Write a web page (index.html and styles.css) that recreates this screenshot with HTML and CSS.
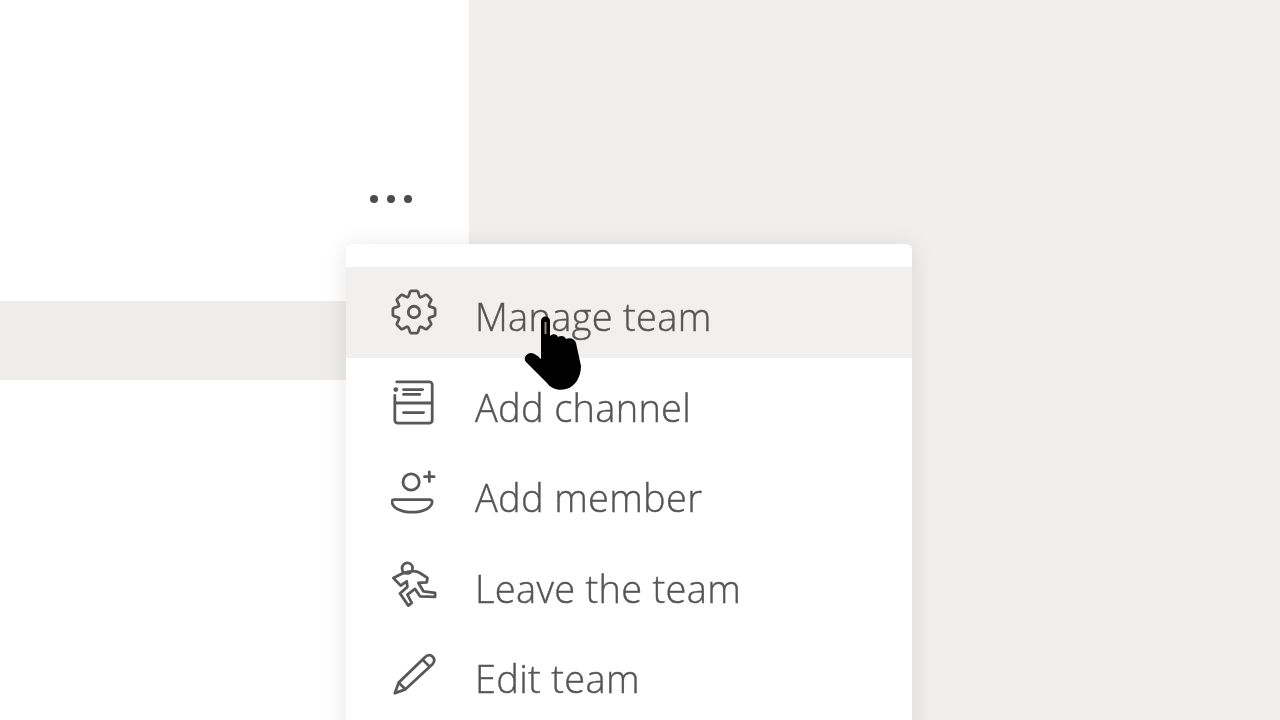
FILE: index.html
```html
<!DOCTYPE html>
<html lang="en">
<head>
  <meta charset="UTF-8">
  <title>Team menu</title>
  <link rel="stylesheet" href="styles.css">
</head>
<body>
  <div class="sidebar">
    <div class="more">
      <span class="dot"></span><span class="dot"></span><span class="dot"></span>
    </div>
    <div class="team-row"></div>
  </div>
  <div class="main"></div>

  <!-- Team options menu -->
  <div class="menu">
    <div class="item hover">
      <svg class="icon" viewBox="0 0 48 48">
        <defs><path id="tooth" d="M17.500 8.300C19.500 7.500 19 2 21 2h6c2 0 1.500 5.500 3.500 6.300"/></defs>
        <use href="#tooth"/>
        <use href="#tooth" transform="rotate(45 24 24)"/>
        <use href="#tooth" transform="rotate(90 24 24)"/>
        <use href="#tooth" transform="rotate(135 24 24)"/>
        <use href="#tooth" transform="rotate(180 24 24)"/>
        <use href="#tooth" transform="rotate(225 24 24)"/>
        <use href="#tooth" transform="rotate(270 24 24)"/>
        <use href="#tooth" transform="rotate(315 24 24)"/>
        <circle cx="24" cy="24" r="6"/>
      </svg>
      <span class="label">Manage team</span>
    </div>
    <div class="item">
      <svg class="icon" viewBox="0 0 48 48">
        <path d="M6 2h34a3 3 0 0 1 3 3v37a3 3 0 0 1-3 3H7a3 3 0 0 1-3-3V16M4 24h39M13 34h21M13 10h20M13 15h17"/>
        <circle class="solid" cx="5" cy="10" r="2.500"/>
      </svg>
      <span class="label">Add channel</span>
    </div>
    <div class="item">
      <svg class="icon" viewBox="0 0 48 48">
        <circle cx="21" cy="12.500" r="8.500"/>
        <path d="M3 31h37c2 0 3 1 3 2.500C42 40 33 44 22 44S2 40 1 33.500C1 32 1.500 31 3 31zM40 2v10M35 7h10"/>
      </svg>
      <span class="label">Add member</span>
    </div>
    <div class="item">
      <svg class="icon" viewBox="0 0 48 48">
        <circle cx="17" cy="7.500" r="5.500"/>
        <path d="M11.200 13.200L2.500 17.700l7.600 8 6.300-4.500.7 5.800-7.700 7 8.700 12.600 3.500-2.800-4.500-8.800 8-5.800 5.200 7.600L46 37.500v-4.200l-12.200-1.700-5.200-8.700 8.700-.7.700-4.500-7.700-5.200c-5-3-12-2-19.100.7z"/>
      </svg>
      <span class="label">Leave the team</span>
    </div>
    <div class="item">
      <svg class="icon" viewBox="0 0 48 48">
        <path d="M4 44l4-11L36 6c2.500-2 5.500-2 7.500 0s2 5 0 7.500L15 40zM8 33l7 7M33 9l6 6"/>
      </svg>
      <span class="label">Edit team</span>
    </div>
  </div>

  <svg class="cursor" viewBox="0 0 58 74">
    <path d="M17 5c0-6 9-6 9 0v15c3-3 7-2 8 1 3-2 7-1 8 2 4-2 9 0 10 4l5 23c0 11-6 21-15 23-7 2-15 0-19-6L2 46c-3-3 0-9 5-9 3 0 7 3 10 6z"/>
    <path class="shine" d="M20.500 6h2v12h-2z"/>
  </svg>
</body>
</html>
```

FILE: styles.css
```css
html, body {
  margin: 0;
  height: 720px;
  overflow: hidden;
}
body {
  display: flex;
  font-family: 'Open Sans', sans-serif;
  background: #f0efed;
}
.sidebar {
  width: 469px;
  height: 720px;
  background: #fff;
}
.more {
  display: flex;
  justify-content: flex-end;
  gap: 9px;
  padding: 195px 57px 0 0;
  height: 301px;
  box-sizing: border-box;
}
.dot {
  width: 8px;
  height: 8px;
  border-radius: 50%;
  background: #4b4b50;
}
.team-row {
  height: 79px;
  background: #eeedeb;
}
.main {
  flex: 1;
}
.menu {
  position: absolute;
  left: 346px;
  top: 244px;
  width: 566px;
  height: 500px;
  padding-top: 23px;
  box-sizing: border-box;
  background: #fff;
  border-radius: 6px;
  box-shadow: 0 2px 24px rgba(0, 0, 0, 0.1);
}
.item {
  display: flex;
  align-items: center;
  gap: 38px;
  height: 90.5px;
  padding-left: 45px;
  font-size: 38px;
  font-weight: 300;
  letter-spacing: 0.3px;
  color: #555;
  -webkit-text-stroke: 0.4px #555;
}
.item.hover {
  background: #f1f0ee;
}
.label {
  margin-top: 8px;
  filter: blur(0.5px);
}
.icon {
  width: 46px;
  height: 46px;
  fill: none;
  stroke: #58585a;
  stroke-width: 2.9;
  stroke-linejoin: round;
  stroke-linecap: round;
  filter: blur(0.5px);
}
.solid {
  fill: #58585a;
  stroke: none;
}
.cursor {
  position: absolute;
  left: 524px;
  top: 316px;
  width: 58px;
  height: 74px;
  fill: #000;
}
.cursor .shine {
  fill: #8a8a8a;
}
```
